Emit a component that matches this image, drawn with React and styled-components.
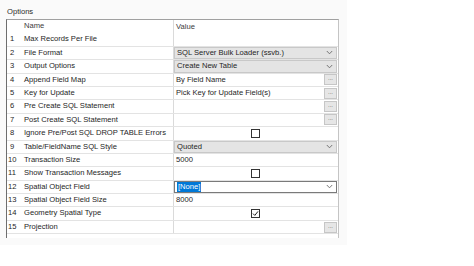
import React from 'react';
import styled, { createGlobalStyle } from 'styled-components';

const GlobalStyle = createGlobalStyle`
    html, body {
        margin : 0;
        padding : 0;
        background : #ffffff;
    }
    body {
        font-family : 'Liberation Sans', Arial, sans-serif;
        font-size : 7.6px;
        color : #1e1e1e;
    }
`

const rows = [
    { name : 'Max Records Per File', type : 'text', value : '' },
    { name : 'File Format', type : 'select', value : 'SQL Server Bulk Loader (ssvb.)' },
    { name : 'Output Options', type : 'select', value : 'Create New Table' },
    { name : 'Append Field Map', type : 'button', value : 'By Field Name' },
    { name : 'Key for Update', type : 'button', value : 'Pick Key for Update Field(s)' },
    { name : 'Pre Create SQL Statement', type : 'button', value : '' },
    { name : 'Post Create SQL Statement', type : 'button', value : '' },
    { name : 'Ignore Pre/Post SQL DROP TABLE Errors', type : 'check', value : false },
    { name : 'Table/FieldName SQL Style', type : 'select', value : 'Quoted' },
    { name : 'Transaction Size', type : 'text', value : '5000' },
    { name : 'Show Transaction Messages', type : 'check', value : false },
    { name : 'Spatial Object Field', type : 'focus', value : '[None]' },
    { name : 'Spatial Object Field Size', type : 'text', value : '8000' },
    { name : 'Geometry Spatial Type', type : 'check', value : true },
    { name : 'Projection', type : 'button', value : '' },
];

const Chevron = () => (
    <svg width="7" height="5" viewBox="0 0 7 5">
        <polyline points="0.8,1 3.5,3.8 6.2,1" fill="none" stroke="#6a6a6a" strokeWidth="0.9" />
    </svg>
);

const Tick = () => (
    <svg width="7" height="7" viewBox="0 0 7 7">
        <polyline points="1,3.6 2.8,5.4 6,1.4" fill="none" stroke="#222" strokeWidth="1" />
    </svg>
);

const ValueCell = ({ row }) => {
    if (row.type === 'select' || row.type === 'focus') {
        return (
            <StSelect $focus={row.type === 'focus'}>
                {row.type === 'focus'
                    ? <StHighlight>{row.value}</StHighlight>
                    : <span>{row.value}</span>}
                <Chevron />
            </StSelect>
        );
    }
    if (row.type === 'button') {
        return (
            <StValue>
                <StValueText>{row.value}</StValueText>
                <StDotsButton>...</StDotsButton>
            </StValue>
        );
    }
    if (row.type === 'check') {
        return (
            <StValue $center>
                <StCheckBox>{row.value && <Tick />}</StCheckBox>
            </StValue>
        );
    }
    return (
        <StValue>
            <StValueText>{row.value}</StValueText>
        </StValue>
    );
};

const App = () => {
    return (
        <>
            <GlobalStyle />
            <StPanel>
                <StTitle>Options</StTitle>
                <StGrid>
                    <StRow $header>
                        <StIndex />
                        <StName>Name</StName>
                        <StValue><StValueText>Value</StValueText></StValue>
                    </StRow>
                    {rows.map((row, i) => (
                        <StRow key={row.name}>
                            <StIndex>{i + 1}</StIndex>
                            <StName>{row.name}</StName>
                            <ValueCell row={row} />
                        </StRow>
                    ))}
                </StGrid>
            </StPanel>
        </>
    );
};

export default App;

const StPanel = styled.div`
    width : 347px;
    height : 245px;
    background : #fafafa;
    padding : 7px 0 0 6px;
    box-sizing : border-box;
`
const StTitle = styled.div`
    height : 12px;
    line-height : 10px;
    padding-left : 1px;
    color : #2a2a2a;
`
const StGrid = styled.div`
    width : 333px;
    height : 219px;
    box-sizing : border-box;
    background : #ffffff;
    border-top : 1px solid #a0a0a0;
    border-left : 1px solid #6e6e6e;
    border-right : 1px solid #c4c4c4;
`
const StRow = styled.div`
    display : grid;
    grid-template-columns : 9px 158px 1fr;
    height : 13.4px;
    box-sizing : border-box;
    border-bottom : ${props => props.$header ? 'none' : '1px solid #e3e3e3'};
    line-height : 12px;
    color : ${props => props.$header ? '#3a3a3a' : '#1e1e1e'};
`
const StIndex = styled.div`
    text-align : center;
    padding-left : 1px;
`
const StName = styled.div`
    padding-left : 8px;
    white-space : nowrap;
    overflow : hidden;
    border-right : 1px solid #dadada;
`
const StValue = styled.div`
    display : flex;
    align-items : center;
    justify-content : ${props => props.$center ? 'center' : 'space-between'};
    padding-left : ${props => props.$center ? '0' : '2px'};
    padding-right : 1px;
    min-width : 0;
`
const StValueText = styled.span`
    white-space : nowrap;
`
const StSelect = styled.div`
    display : flex;
    align-items : center;
    justify-content : space-between;
    margin : 0 1px 0 0;
    padding : 0 3px 0 2px;
    height : 12.4px;
    box-sizing : border-box;
    background : ${props => props.$focus ? '#ffffff' : '#e4e4e4'};
    border : 1px solid ${props => props.$focus ? '#7a7a7a' : '#c8c8c8'};
    line-height : 10px;
`
const StHighlight = styled.span`
    background : #0078d7;
    color : #ffffff;
    padding : 0 1px;
`
const StDotsButton = styled.div`
    width : 13px;
    height : 11px;
    box-sizing : border-box;
    background : #e6e6e6;
    border : 1px solid #c6c6c6;
    color : #555;
    font-size : 6px;
    line-height : 6px;
    text-align : center;
`
const StCheckBox = styled.div`
    width : 9px;
    height : 9px;
    box-sizing : border-box;
    border : 1px solid #333333;
    background : #ffffff;
    display : flex;
    align-items : center;
    justify-content : center;
`
